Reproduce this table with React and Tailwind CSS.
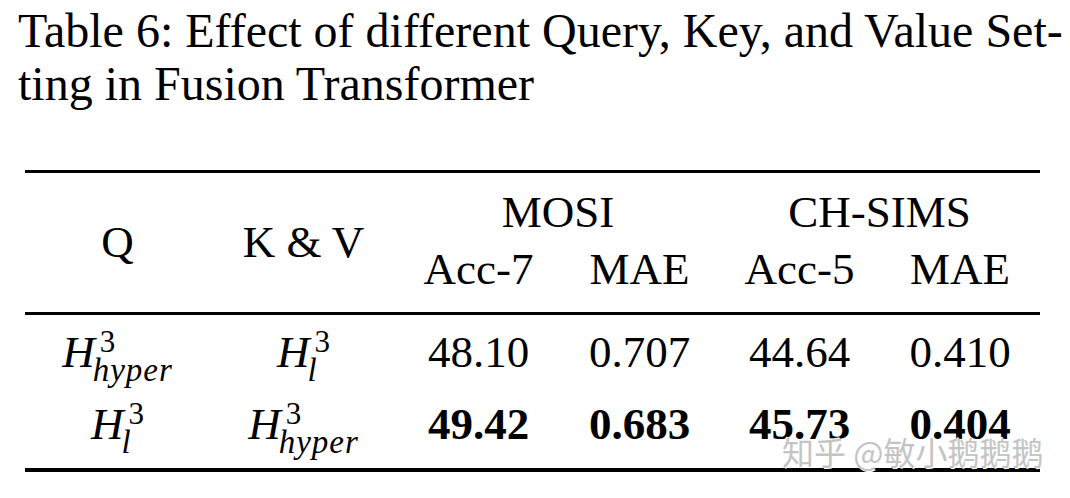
import React from "react";

const serif = "font-['Liberation_Serif','Times_New_Roman',serif]";

// H with a superscript 3 and an italic subscript stacked under it
const Hsym = ({ sub }) => (
  <span className="whitespace-nowrap">
    <span className="italic tracking-[2px]">H</span>
    <span className="inline-flex flex-col items-start align-[15px] text-[31px] leading-[28px] -mt-[2px] -mb-[10px] ml-[3px]">
      <span className="not-italic">3</span>
      <span className="italic text-[33px] -ml-[7px] tracking-[1px]">{sub}</span>
    </span>
  </span>
);

const rows = [
  { q: "hyper", kv: "l", vals: ["48.10", "0.707", "44.64", "0.410"], bold: false },
  { q: "l", kv: "hyper", vals: ["49.42", "0.683", "45.73", "0.404"], bold: true },
];

const App = () => {
  return (
    <div className={`relative w-[1070px] h-[498px] bg-white text-black overflow-hidden ${serif}`}>
      <p className="pl-[18px] pt-[4px] text-[48px] leading-[53px] whitespace-nowrap">
        Table 6: Effect of different Query, Key, and Value Set-
        <br />
        ting in Fusion Transformer
      </p>

      <table className="ml-[25px] mt-[60px] w-[1015px] table-fixed border-collapse text-[45px] leading-[45px] text-center">
        <colgroup>
          <col className="w-[185px]" />
          <col className="w-[187px]" />
          <col className="w-[163px]" />
          <col className="w-[159px]" />
          <col className="w-[161px]" />
          <col className="w-[160px]" />
        </colgroup>
        <thead>
          <tr className="border-t-[3px] border-black">
            <td rowSpan={2} className="align-middle">Q</td>
            <td rowSpan={2} className="align-middle whitespace-nowrap">K &amp; V</td>
            <td colSpan={2} className="pt-[17px]">MOSI</td>
            <td colSpan={2} className="pt-[17px]">CH-SIMS</td>
          </tr>
          <tr className="border-b-[3px] border-black">
            <td className="pt-[12px] pb-[20px]">Acc-7</td>
            <td className="pt-[12px] pb-[20px]">MAE</td>
            <td className="pt-[12px] pb-[20px]">Acc-5</td>
            <td className="pt-[12px] pb-[20px]">MAE</td>
          </tr>
        </thead>
        <tbody className="border-b-[4px] border-black">
          {rows.map((r, i) => (
            <tr key={i}>
              <td className={i === 0 ? "pt-[15px] pb-[12px]" : "pt-[15px] pb-[21px]"}>
                <Hsym sub={r.q} />
              </td>
              <td className={i === 0 ? "pt-[15px] pb-[12px]" : "pt-[15px] pb-[21px]"}>
                <Hsym sub={r.kv} />
              </td>
              {r.vals.map((v) => (
                <td
                  key={v}
                  className={`${i === 0 ? "pt-[15px] pb-[12px]" : "pt-[15px] pb-[21px]"} ${r.bold ? "font-bold" : ""}`}
                >
                  {v}
                </td>
              ))}
            </tr>
          ))}
        </tbody>
      </table>

      <div className="absolute left-[782px] top-[433px] text-[32px] leading-[36px] text-[#c4c4c4] font-['Noto_Sans_CJK_SC',sans-serif] whitespace-nowrap [text-shadow:1px_1px_0_#ffffff,-1px_-1px_0_#ffffff]">
        知乎 @敏小鹅鹅鹅
      </div>
    </div>
  );
};

export default App;
